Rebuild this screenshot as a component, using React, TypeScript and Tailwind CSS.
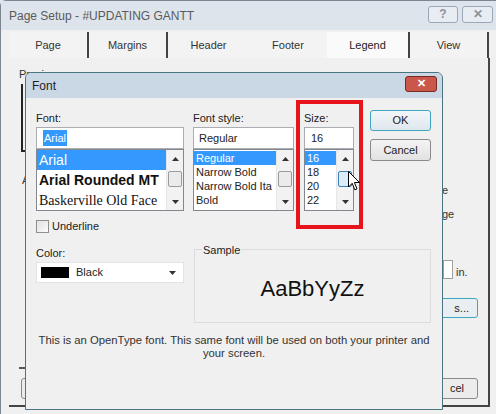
import React from 'react';

const tabs = [
  { label: 'Page', w: 'w-[80px]', sep: true },
  { label: 'Margins', w: 'w-[79px]', sep: true },
  { label: 'Header', w: 'w-[81px]', sep: false },
  { label: 'Footer', w: 'w-[78px]', sep: false },
  { label: 'Legend', w: 'w-[83px]', sep: true, active: true },
  { label: 'View', w: 'w-[79px]', sep: true },
];

const Arrow = ({ up }: { up?: boolean }) => (
  <svg width="7" height="4" viewBox="0 0 7 4">
    <path d={up ? 'M0 4 L3.5 0 L7 4 Z' : 'M0 0 L3.5 4 L7 0 Z'} fill="#333" />
  </svg>
);

const ScrollBar = ({ hot }: { hot?: boolean }) => (
  <div className="w-[17px] h-full flex flex-col bg-[#f2f2f2] border-l border-[#e6e6e6]">
    <div className="h-[17px] flex items-center justify-center">
      <Arrow up />
    </div>
    <div
      className={`mt-[4px] mx-[1px] h-[16px] rounded-[2px] border ${
        hot ? 'border-[#3c7fb1] bg-[#dcebfa]' : 'border-[#9b9b9b] bg-[#ebebeb]'
      }`}
    />
    <div className="flex-1" />
    <div className="h-[17px] flex items-center justify-center">
      <Arrow />
    </div>
  </div>
);

export default function App() {
  return (
    <div className="relative w-[496px] h-[414px] overflow-hidden bg-[#dfe6ee] font-['Liberation_Sans',Arial,sans-serif] text-[#222]">
      {/* Page Setup window (inactive, behind) */}
      <div className="flex flex-col h-full border-l border-t border-[#7d8590] rounded-tl-[6px]">
        <div className="h-[29px] flex items-center pl-[8px] pr-[3px] bg-[#dde4ec]">
          <span className="text-[12px] text-[#5a5a5a] flex-1">Page Setup - #UPDATING GANTT</span>
          <div className="flex gap-[4px] mt-[-3px]">
            <div className="w-[30px] h-[17px] rounded-[3px] border border-[#9aa7b6] bg-[#e8edf3] flex items-center justify-center text-[12px] font-bold text-[#8a929c]">
              ?
            </div>
            <div className="w-[31px] h-[17px] rounded-[3px] border border-[#9aa7b6] bg-[#e8edf3] flex items-center justify-center text-[12px] font-bold text-[#8a929c]">
              ✕
            </div>
          </div>
        </div>
        <div className="flex-1 bg-[#f0f0f0] pl-[8px] pr-[6px] pb-[7px] flex flex-col">
          <div className="h-[28px] pt-[2px] flex">
            {tabs.map((t) => (
              <div
                key={t.label}
                className={`${t.w} flex items-center justify-center text-[11px] ${
                  t.active ? 'bg-[#fafafa] text-[#222]' : 'bg-[#f3f3f3] text-[#333]'
                } ${t.sep ? 'border-r-2 border-[#444]' : ''}`}
              >
                {t.label}
              </div>
            ))}
          </div>
          <div className="flex-1 border-r-2 border-b-2 border-[#444] relative">
            <div className="absolute left-[10px] top-[8px] text-[11px] text-[#333]">Preview:</div>
            <div className="absolute left-[12px] top-[26px] w-[8px] h-[68px] border-l-2 border-b-2 border-[#222]" />
            <div className="absolute left-[13px] top-[114px] text-[11px] text-[#333]">A</div>
            <div className="absolute left-[433px] top-[124px] text-[11px] text-[#333]">e</div>
            <div className="absolute left-[433px] top-[148px] text-[11px] text-[#333]">ge</div>
            <div className="absolute left-[434px] top-[202px] w-[10px] h-[19px] border border-[#a0a0a0] bg-white" />
            <div className="absolute left-[447px] top-[206px] text-[11px] text-[#333]">in.</div>
            <div className="absolute left-[420px] top-[240px] w-[49px] h-[20px] rounded-[3px] border border-[#3fa6c0] bg-[#e9eef3] flex items-center justify-end pr-[8px] text-[11px]">
              s...
            </div>
            <div className="absolute left-[10px] top-[309px] w-[8px] border-t-2 border-[#555]" />
            <div className="absolute left-[12px] top-[320px] w-[40px] h-[21px] rounded-[3px] border border-[#8a8a8a] bg-[#ececec]" />
            <div className="absolute left-[420px] top-[320px] w-[49px] h-[21px] rounded-[3px] border border-[#8a8a8a] bg-[#ececec] flex items-center justify-end pr-[13px] text-[11px]">
              cel
            </div>
          </div>
        </div>
      </div>

      {/* Font dialog on top */}
      <div className="absolute left-[25px] top-[72px] w-[418px] h-[338px] flex flex-col rounded-t-[6px] border border-[#4a7580] bg-[#cbd8e6] overflow-hidden">
        <div className="h-[25px] flex items-center pl-[6px] pr-[5px] bg-[#cad7e5]">
          <span className="text-[12px] text-[#1e1e1e] flex-1">Font</span>
          <div className="w-[32px] h-[16px] mt-[-4px] rounded-[3px] border border-[#7b2a22] bg-[#c9574a] flex items-center justify-center text-white text-[11px] font-bold">
            ✕
          </div>
        </div>
        <div className="flex-1 bg-[#f0f0f0] pl-[10px] pt-[12px] relative text-[11px]">
          <div className="flex">
            {/* Font column */}
            <div className="w-[148px] flex flex-col">
              <div className="h-[17px]">Font:</div>
              <div className="h-[22px] border border-[#abadb3] bg-white flex items-center pl-[6px]">
                <span className="bg-[#3399ff] text-white px-[1px]">Arial</span>
              </div>
              <div className="h-[62px] border border-[#828790] bg-white flex">
                <div className="flex-1 flex flex-col overflow-hidden whitespace-nowrap">
                  <div className="h-[20px] bg-[#3399ff] text-white text-[14px] flex items-center pl-[2px]">Arial</div>
                  <div className="h-[20px] text-[14px] font-bold flex items-center pl-[2px] text-[#111]">Arial Rounded MT</div>
                  <div className="h-[20px] text-[14px] font-['Liberation_Serif',serif] flex items-center pl-[2px] text-[#111]">
                    Baskerville Old Face
                  </div>
                </div>
                <ScrollBar />
              </div>
            </div>
            {/* Style column */}
            <div className="w-[101px] ml-[9px] flex flex-col">
              <div className="h-[17px]">Font style:</div>
              <div className="h-[22px] border border-[#abadb3] bg-white flex items-center pl-[5px]">Regular</div>
              <div className="h-[62px] border border-[#828790] bg-white flex">
                <div className="flex-1 flex flex-col overflow-hidden whitespace-nowrap leading-[14px] pt-[1px]">
                  <div className="bg-[#3399ff] text-white pl-[2px]">Regular</div>
                  <div className="pl-[2px]">Narrow Bold</div>
                  <div className="pl-[2px]">Narrow Bold Ita</div>
                  <div className="pl-[2px]">Bold</div>
                </div>
                <ScrollBar />
              </div>
            </div>
            {/* Size column */}
            <div className="w-[50px] ml-[10px] flex flex-col">
              <div className="h-[17px]">Size:</div>
              <div className="h-[22px] border border-[#abadb3] bg-white flex items-center pl-[6px]">16</div>
              <div className="h-[62px] border border-[#828790] bg-white flex">
                <div className="flex-1 flex flex-col overflow-hidden leading-[14px] pt-[1px]">
                  <div className="bg-[#3399ff] text-white pl-[2px]">16</div>
                  <div className="pl-[2px]">18</div>
                  <div className="pl-[2px]">20</div>
                  <div className="pl-[2px]">22</div>
                </div>
                <ScrollBar hot />
              </div>
            </div>
            {/* Buttons */}
            <div className="w-[61px] ml-[16px] flex flex-col gap-[8px]">
              <div className="h-[21px] rounded-[3px] border border-[#3fa6c0] bg-gradient-to-b from-[#f2f6f9] to-[#dfe7ee] flex items-center justify-center">
                OK
              </div>
              <div className="h-[22px] rounded-[3px] border border-[#8a8a8a] bg-gradient-to-b from-[#f4f4f4] to-[#e2e2e2] flex items-center justify-center">
                Cancel
              </div>
            </div>
          </div>

          <div className="flex mt-[1px]">
            <div className="w-[148px] flex flex-col">
              <div className="flex items-center gap-[3px] mt-[8px] h-[13px]">
                <div className="w-[13px] h-[13px] border border-[#8f8f8f] bg-gradient-to-br from-[#e2e2e2] to-[#fbfbfb]" />
                <span>Underline</span>
              </div>
              <div className="mt-[12px] h-[15px]">Color:</div>
              <div className="mt-[2px] h-[21px] bg-white border border-[#e3e3e3] flex items-center pl-[4px] pr-[7px]">
                <div className="w-[28px] h-[11px] bg-black" />
                <span className="ml-[7px] flex-1">Black</span>
                <Arrow />
              </div>
            </div>
            <div className="ml-[10px] mt-[37px] w-[237px] h-[74px] border border-[#dcdcdc] relative flex items-center justify-center">
              <span className="absolute left-[7px] top-[-8px] bg-[#f0f0f0] px-[1px]">Sample</span>
              <span className="text-[22px] mt-[4px] text-[#111]">AaBbYyZz</span>
            </div>
          </div>

          <div className="mt-[11px] pr-[10px] text-center text-[11.3px] leading-[13px] text-[#333] whitespace-nowrap">
            This is an OpenType font. This same font will be used on both your printer and
            <br />
            your screen.
          </div>

          {/* annotation box */}
          <div className="absolute left-[270px] top-[2px] w-[67px] h-[129px] border-[4px] border-[#e8141c]" />
        </div>
      </div>

      {/* mouse cursor */}
      <svg className="absolute left-[348px] top-[171px]" width="12" height="20" viewBox="0 0 12 20">
        <path d="M0.5 0.5 L0.5 16 L4.2 12.3 L6.8 18.8 L9 17.9 L6.4 11.5 L11.5 11.5 Z" fill="#fff" stroke="#000" strokeWidth="1" />
      </svg>
    </div>
  );
}
